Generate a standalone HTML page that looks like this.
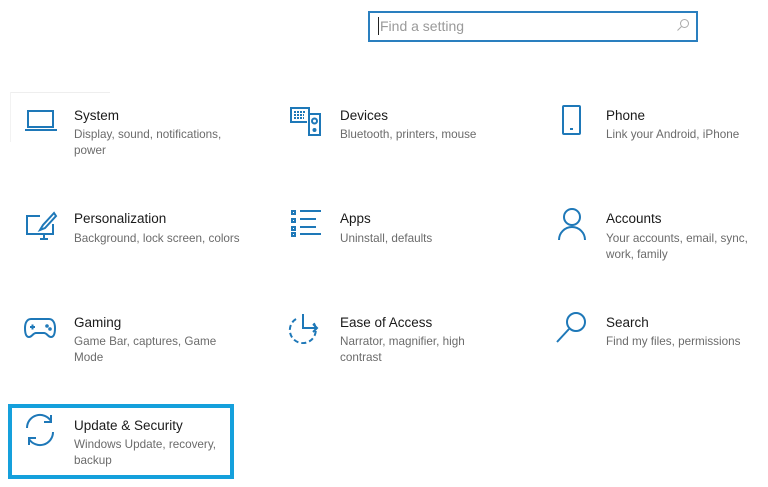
<!DOCTYPE html>
<html><head><style>
body{margin:0;width:768px;height:487px;background:#fff;position:relative;overflow:hidden;font-family:"Liberation Sans",sans-serif}
.t{position:absolute;font-size:13.5px;color:#1a1a1a;line-height:18px}
.d{position:absolute;font-size:11.7px;color:#6b6b6b;line-height:16px;width:152px}
svg{position:absolute;fill:none;stroke:#1e78b8;stroke-width:2}
</style></head><body>
<div style="position:absolute;left:368px;top:11px;width:326px;height:27px;border:2px solid #2a7fbf"></div>
<div style="position:absolute;left:378px;top:17px;width:1px;height:18px;background:#222"></div>
<div style="position:absolute;left:380px;top:18px;font-size:14px;color:#9a9a9a">Find a setting</div>
<svg style="left:676px;top:18px" width="14" height="14" viewBox="0 0 14 14"><circle cx="8.5" cy="5.5" r="4" stroke="#aaa" stroke-width="1"/><path d="M5.5 8.5L1.5 12.5" stroke="#aaa" stroke-width="1"/></svg>
<div style="position:absolute;left:10px;top:92px;width:100px;height:1px;background:#eee"></div>
<div style="position:absolute;left:10px;top:92px;width:1px;height:50px;background:#f2f2f2"></div>

<div style="position:absolute;left:8px;top:404px;width:218px;height:67px;border:4px solid #15a0dc"></div>

<svg style="left:24px;top:108px" width="34" height="26" viewBox="0 0 34 26"><rect x="4" y="3" width="25" height="16"/><path d="M1 22h32"/></svg>
<div class="t" style="left:74px;top:107px">System</div>
<div class="d" style="left:74px;top:127px">Display, sound, notifications, power</div>

<svg style="left:289px;top:104px" width="34" height="34" viewBox="0 0 34 34"><path d="M20 12V4H2v14h16"/><path d="M5 8h12M5 11h10M5 14h10" stroke-dasharray="2 1"/><rect x="20" y="10" width="11" height="21"/><circle cx="25.5" cy="17" r="2.5"/><circle cx="25.5" cy="26" r="1"/></svg>
<div class="t" style="left:340px;top:107px">Devices</div>
<div class="d" style="left:340px;top:127px;width:200px">Bluetooth, printers, mouse</div>

<svg style="left:560px;top:104px" width="24" height="34" viewBox="0 0 24 34"><rect x="3" y="2" width="17" height="28" rx="1"/><path d="M10 25h3"/></svg>
<div class="t" style="left:606px;top:107px">Phone</div>
<div class="d" style="left:606px;top:127px;width:160px">Link your Android, iPhone</div>

<svg style="left:24px;top:210px" width="34" height="32" viewBox="0 0 34 32"><path d="M16 6H3v18h26V14"/><path d="M16 29h8M20 24v5"/><path d="M30 3L19 15l-3 5 5-2 11-12z"/></svg>
<div class="t" style="left:74px;top:210px">Personalization</div>
<div class="d" style="left:74px;top:231px;width:200px">Background, lock screen, colors</div>

<svg style="left:289px;top:208px" width="34" height="32" viewBox="0 0 34 32"><rect x="3" y="3" width="3" height="3"/><rect x="3" y="11" width="3" height="3"/><rect x="3" y="19" width="3" height="3"/><rect x="3" y="25" width="3" height="3"/><path d="M11 3h21M11 11h16M11 19h16M11 26h21"/></svg>
<div class="t" style="left:340px;top:210px">Apps</div>
<div class="d" style="left:340px;top:231px">Uninstall, defaults</div>

<svg style="left:556px;top:206px" width="32" height="36" viewBox="0 0 32 36"><circle cx="16" cy="11" r="8"/><path d="M3 34a13 13 0 0 1 26 0"/></svg>
<div class="t" style="left:606px;top:210px">Accounts</div>
<div class="d" style="left:606px;top:231px">Your accounts, email, sync, work, family</div>

<svg style="left:23px;top:315px" width="34" height="26" viewBox="0 0 34 26"><path d="M8 4h18c4 0 6 4 6 9s-1 9-4 9c-3 0-4-4-7-4h-8c-3 0-4 4-7 4s-4-4-4-9 2-9 6-9z"/><path d="M7 12h5M9.5 9.5v5"/><circle cx="24" cy="11" r="0.8"/><circle cx="27" cy="14" r="0.8"/></svg>
<div class="t" style="left:74px;top:314px">Gaming</div>
<div class="d" style="left:74px;top:334px">Game Bar, captures, Game Mode</div>

<svg style="left:288px;top:312px" width="36" height="32" viewBox="0 0 36 32"><path d="M8 7a13 13 0 1 0 17 3" stroke-dasharray="5 3"/><path d="M15 2v14h14M25 12l4 4-4 4"/></svg>
<div class="t" style="left:340px;top:314px">Ease of Access</div>
<div class="d" style="left:340px;top:334px">Narrator, magnifier, high contrast</div>

<svg style="left:555px;top:309px" width="34" height="36" viewBox="0 0 34 36"><circle cx="21" cy="13" r="9"/><path d="M14 20L2 33"/></svg>
<div class="t" style="left:606px;top:314px">Search</div>
<div class="d" style="left:606px;top:334px;width:160px">Find my files, permissions</div>

<svg style="left:23px;top:412px" width="34" height="36" viewBox="0 0 34 36"><path d="M4 16A13 13 0 0 1 28 9M30 20A13 13 0 0 1 6 27"/><path d="M28 3v7h-7M6 33v-7h7"/></svg>
<div class="t" style="left:74px;top:417px">Update &amp; Security</div>
<div class="d" style="left:74px;top:437px">Windows Update, recovery, backup</div>
</body></html>
